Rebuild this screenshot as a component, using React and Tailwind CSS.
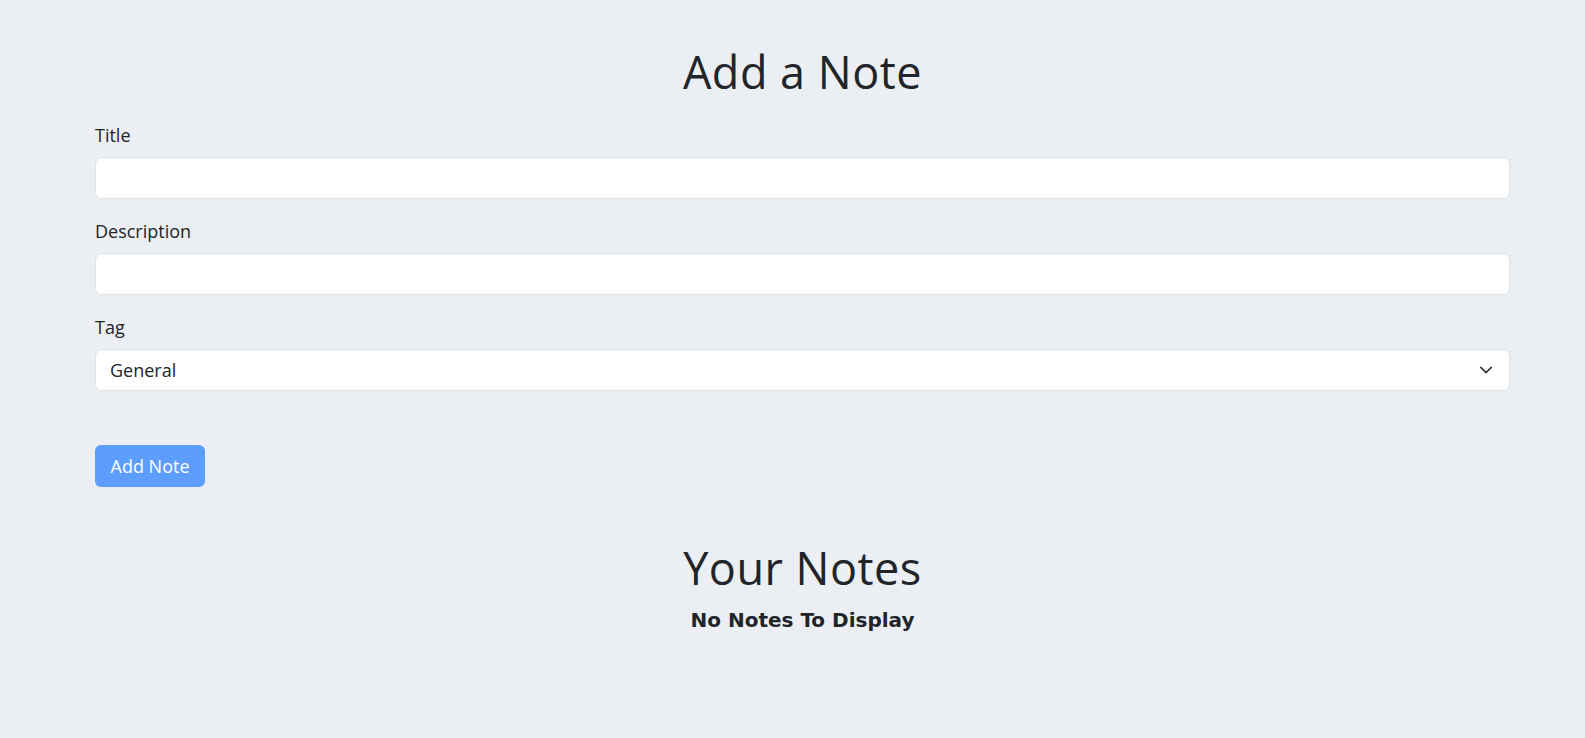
import React, { useState } from "react";

const App = () => {
  const [note, setNote] = useState({ title: "", description: "", tag: "General" });

  const handleChange = (e) => {
    const { name, value } = e.target;
    setNote((prev) => ({ ...prev, [name]: value }));
  };

  return (
    <div
      className="min-h-screen bg-[#ebeff3] text-[#212529]"
      style={{ fontFamily: "'Open Sans', 'Noto Sans', sans-serif" }}
    >
      <div className="ml-[95px] w-[1415px] pt-[43px]">
        <h1 className="text-center text-[45px] leading-[57px] font-normal tracking-[0.5px] mb-[23px]">Add a Note</h1>

        <div className="flex flex-col">
          <label className="text-[18px] leading-[24px] mb-[10px]">Title</label>
          <input
            type="text"
            name="title"
            value={note.title}
            onChange={handleChange}
            className="h-[42px] w-full bg-white border border-[#dee2e6] rounded-[7px] px-[14px] text-[18px] outline-none"
          />

          <label className="text-[18px] leading-[24px] mt-[20px] mb-[10px]">Description</label>
          <input
            type="text"
            name="description"
            value={note.description}
            onChange={handleChange}
            className="h-[42px] w-full bg-white border border-[#dee2e6] rounded-[7px] px-[14px] text-[18px] outline-none"
          />

          <label className="text-[18px] leading-[24px] mt-[20px] mb-[10px]">Tag</label>
          <div className="relative">
            <select
              name="tag"
              value={note.tag}
              onChange={handleChange}
              className="appearance-none h-[42px] w-full bg-white border border-[#dee2e6] rounded-[7px] pl-[14px] pr-10 text-[18px] outline-none"
            >
              <option>General</option>
              <option>Personal</option>
              <option>Work</option>
            </select>
            <svg
              className="pointer-events-none absolute right-[17px] top-1/2 -translate-y-1/2"
              width="14"
              height="14"
              viewBox="0 0 16 16"
              fill="none"
              stroke="#343a40"
              strokeWidth="2"
              strokeLinecap="round"
              strokeLinejoin="round"
            >
              <path d="M2 5l6 6 6-6" />
            </svg>
          </div>

          <div className="mt-[54px]">
            <button className="h-[42px] w-[110px] rounded-[6px] bg-[#5d9dfd] text-white text-[18px]">
              Add Note
            </button>
          </div>
        </div>

        <h2 className="text-center text-[45px] leading-[57px] font-normal tracking-[0.5px] mt-[52px]">Your Notes</h2>
        <p
          className="text-center text-[20px] font-bold mt-[9px]"
          style={{ fontFamily: "'Comic Sans MS', 'DejaVu Sans', sans-serif" }}
        >
          No Notes To Display
        </p>
      </div>
    </div>
  );
};

export default App;
